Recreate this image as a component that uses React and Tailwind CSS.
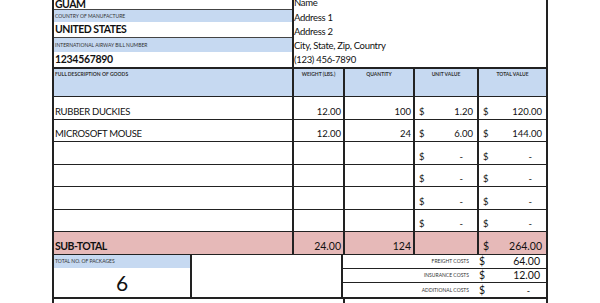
import React from "react";

const font = { fontFamily: "Lato, 'Open Sans', sans-serif" };

const items = [
  { desc: "RUBBER DUCKIES", weight: "12.00", qty: "100", unit: "1.20", total: "120.00" },
  { desc: "MICROSOFT MOUSE", weight: "12.00", qty: "24", unit: "6.00", total: "144.00" },
  { desc: "", weight: "", qty: "", unit: "-", total: "-" },
  { desc: "", weight: "", qty: "", unit: "-", total: "-" },
  { desc: "", weight: "", qty: "", unit: "-", total: "-" },
  { desc: "", weight: "", qty: "", unit: "-", total: "-" },
];

const rowHeights = ["h-[23px]", "h-[22px]", "h-[23px]", "h-[22px]", "h-[23px]", "h-[22px]"];

function Money({ value, dash }) {
  return (
    <div className="flex h-full items-end justify-between pb-[3px] pl-[4px] pr-[4px]">
      <span>$</span>
      <span className={dash ? "pr-[10px]" : ""}>{value}</span>
    </div>
  );
}

export default function App() {
  return (
    <div className="h-[303px] w-[600px] overflow-hidden bg-white text-[#111]" style={font}>
      <div className="-mt-[4px] ml-[52px] w-[496px] border-x-2 border-[#222]">
        {/* shipper / consignee block */}
        <div className="flex border-b-2 border-[#222]">
          <div className="flex w-[238px] flex-col">
            <div className="flex h-[14px] items-end border-b border-[#444] px-[1px] text-[10.5px] font-bold leading-none tracking-[-0.5px]">
              GUAM
            </div>
            <div className="flex h-[12px] items-center bg-[#c6d9f1] px-[1px] text-[5px] uppercase leading-none text-[#333]">
              Country of Manufacture
            </div>
            <div className="flex h-[16px] items-center border-b border-[#444] px-[1px] text-[10.5px] font-bold leading-none tracking-[-0.5px]">
              UNITED STATES
            </div>
            <div className="flex h-[14px] items-center bg-[#c6d9f1] px-[1px] text-[5px] uppercase leading-none text-[#333]">
              International Airway Bill Number
            </div>
            <div className="flex h-[15px] items-center px-[1px] text-[10.5px] font-bold leading-none tracking-[-0.3px]">
              1234567890
            </div>
          </div>
          <div className="flex w-[254px] flex-col border-l-2 border-[#222] text-[9.5px] leading-none tracking-[-0.3px]">
            <div className="flex h-[14.2px] items-center">Name</div>
            <div className="flex h-[14.2px] items-center">Address 1</div>
            <div className="flex h-[14.2px] items-center">Address 2</div>
            <div className="flex h-[14.2px] items-center">City, State, Zip, Country</div>
            <div className="flex h-[14.2px] items-center">(123) 456-7890</div>
          </div>
        </div>

        {/* header row */}
        <div className="grid h-[28px] grid-cols-[238px_51px_70px_64px_69px] border-b border-[#222] bg-[#c6d9f1] text-[5px] font-bold uppercase leading-none text-[#333]">
          <div className="px-[1px] pt-[3px]">Full Description of Goods</div>
          <div className="border-l-2 border-[#222] pt-[3px] text-center">Weight (lbs.)</div>
          <div className="border-l-2 border-[#222] pt-[3px] text-center">Quantity</div>
          <div className="border-l-2 border-[#222] pt-[3px] text-center">Unit Value</div>
          <div className="border-l-2 border-[#222] pt-[3px] text-center">Total Value</div>
        </div>

        {/* item rows */}
        {items.map((it, i) => (
          <div
            key={i}
            className={`grid grid-cols-[238px_51px_70px_64px_69px] border-b border-[#222] text-[9.5px] leading-none ${rowHeights[i]}`}
          >
            <div className="flex items-end px-[1px] pb-[3px] tracking-[-0.3px]">{it.desc}</div>
            <div className="flex items-end justify-end border-l-2 border-[#222] pb-[3px] pr-[2px]">{it.weight}</div>
            <div className="flex items-end justify-end border-l-2 border-[#222] pb-[3px] pr-[2px]">{it.qty}</div>
            <div className="border-l-2 border-[#222]">
              <Money value={it.unit} dash={it.unit === "-"} />
            </div>
            <div className="border-l-2 border-[#222]">
              <Money value={it.total} dash={it.total === "-"} />
            </div>
          </div>
        ))}

        {/* subtotal */}
        <div className="grid h-[23px] grid-cols-[238px_51px_70px_64px_69px] border-b border-[#222] bg-[#e6b9b8] text-[10.5px] leading-none">
          <div className="flex items-end px-[1px] pb-[3px] font-bold tracking-[-0.5px]">SUB-TOTAL</div>
          <div className="flex items-end justify-end border-l-2 border-[#222] pb-[3px] pr-[2px]">24.00</div>
          <div className="flex items-end justify-end border-l-2 border-[#222] pb-[3px] pr-[2px]">124</div>
          <div className="border-l-2 border-[#222]"></div>
          <div className="border-l-2 border-[#222]">
            <Money value="264.00" />
          </div>
        </div>

        {/* packages and costs */}
        <div className="flex h-[44px] border-b-2 border-[#222]">
          <div className="flex w-[138px] flex-col border-r-2 border-[#222]">
            <div className="flex h-[13px] items-center bg-[#c6d9f1] px-[1px] text-[5px] uppercase leading-none text-[#333]">
              Total No. of Packages
            </div>
            <div className="flex flex-1 items-center justify-center text-[21px] leading-none">6</div>
          </div>
          <div className="w-[149px]"></div>
          <div className="flex flex-1 flex-col border-l-2 border-[#222]">
            {[
              ["Freight Costs", "64.00"],
              ["Insurance Costs", "12.00"],
              ["Additional Costs", "-"],
            ].map(([label, val], i) => (
              <div
                key={label}
                className={`grid grid-cols-[132px_69px] ${i < 2 ? "h-[14px] border-b border-[#222]" : "flex-1"}`}
              >
                <div className="flex items-center justify-end pr-[6px] text-[5px] uppercase leading-none text-[#333]">
                  {label}
                </div>
                <div className="flex items-center justify-between pl-[4px] pr-[4px] text-[10.5px] leading-none">
                  <span>$</span>
                  <span className={val === "-" ? "pr-[10px] text-[9px]" : ""}>{val}</span>
                </div>
              </div>
            ))}
          </div>
        </div>

        {/* bottom row */}
        <div className="flex h-[20px]">
          <div className="w-[289px]"></div>
          <div className="flex-1 border-l-2 border-[#222]"></div>
        </div>
      </div>
    </div>
  );
}
